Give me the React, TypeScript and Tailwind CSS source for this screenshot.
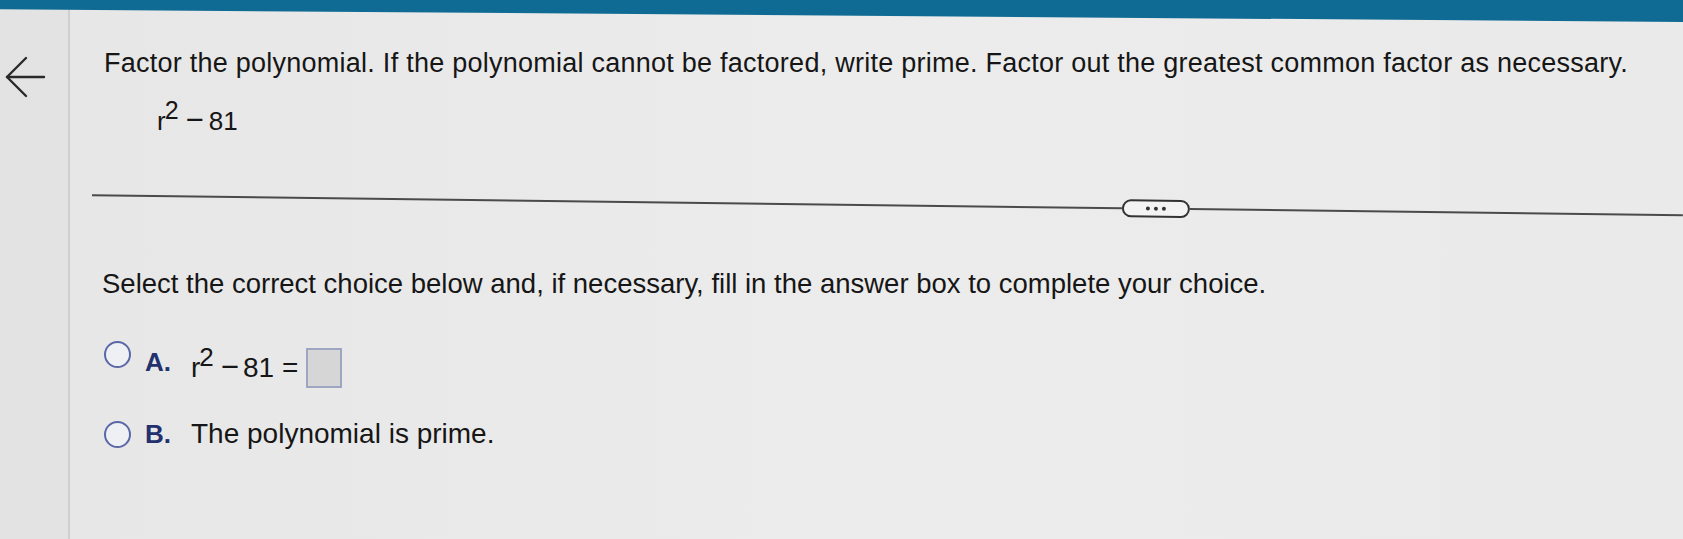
import React from "react";

function Radio() {
  return (
    <span className="inline-block w-[27px] h-[27px] rounded-full border-[2.5px] border-[#5a67a8] bg-[#eef0f4] shrink-0" />
  );
}

export default function App() {
  return (
    <div className="w-[1683px] h-[539px] flex flex-col overflow-hidden bg-[#e9e9e9] font-['Liberation_Sans',Arial,sans-serif] text-[#161616]">
      <div className="h-[22px] shrink-0 bg-[#0f6b93] [clip-path:polygon(0_0,100%_0,100%_100%,0_42%)]" />
      <div className="flex flex-1 -mt-[13px]">
        <aside className="w-[70px] shrink-0 border-r-2 border-[#cfcfcf] bg-[#e3e3e3] pt-[46px] pl-[4px]">
          <svg width="42" height="44" viewBox="0 0 42 44" fill="none" stroke="#2a2a2a" strokeWidth="2.4" strokeLinecap="round" strokeLinejoin="round">
            <path d="M40 22H3" />
            <path d="M22 3L3 22l19 19" />
          </svg>
        </aside>
        <main className="flex-1 bg-gradient-to-r from-[#e7e7e7] via-[#ececec] to-[#eaeaea]">
          <div className="pl-[34px] pt-[38px] text-[27px] leading-[32px] tracking-[0.25px]">
            Factor the polynomial. If the polynomial cannot be factored, write prime. Factor out the greatest common factor as necessary.
          </div>
          <div className="pl-[87px] pt-[25px] text-[26px] leading-[32px] flex items-baseline">
            <span>r</span>
            <sup className="text-[25px] -ml-[1px] relative -top-[11px]">2</sup>
            <span className="ml-[7px] text-[31px]">−</span>
            <span className="ml-[5px]">81</span>
          </div>
          <div className="flex items-center pl-[22px] mt-[49px] rotate-[0.72deg] origin-left">
            <div className="w-[1030px] h-[2px] bg-[#4a4a4a]" />
            <div className="w-[68px] h-[18px] shrink-0 rounded-full border-2 border-[#333] bg-[#f3f3f3] flex items-center justify-center gap-[4px]">
              <span className="w-[4px] h-[4px] bg-[#333] rounded-full" />
              <span className="w-[4px] h-[4px] bg-[#333] rounded-full" />
              <span className="w-[4px] h-[4px] bg-[#333] rounded-full" />
            </div>
            <div className="flex-1 h-[2px] bg-[#4a4a4a]" />
          </div>
          <div className="pl-[32px] pt-[64px] text-[27.5px] leading-[32px]">
            Select the correct choice below and, if necessary, fill in the answer box to complete your choice.
          </div>
          <div className="pl-[34px] pt-[41px] flex flex-col gap-[27px] text-[28px] leading-[38px]">
            <div className="flex items-start">
              <Radio />
              <span className="ml-[14px] mt-[2px] w-[46px] font-bold text-[#23306e] text-[26px]">A.</span>
              <span className="mt-[7px] flex items-baseline">
                <span>r</span>
                <sup className="text-[26px] -ml-[1px] relative -top-[11px]">2</sup>
                <span className="ml-[7px] text-[31px]">−</span>
                <span className="ml-[4px]">81</span>
                <span className="ml-[8px]">=</span>
              </span>
              <span className="ml-[8px] mt-[7px] w-[36px] h-[40px] border-2 border-[#9ea7c2] bg-[#d6d6d6]" />
            </div>
            <div className="flex items-center">
              <Radio />
              <span className="ml-[14px] w-[46px] font-bold text-[#23306e] text-[26px]">B.</span>
              <span>The polynomial is prime.</span>
            </div>
          </div>
        </main>
      </div>
    </div>
  );
}
